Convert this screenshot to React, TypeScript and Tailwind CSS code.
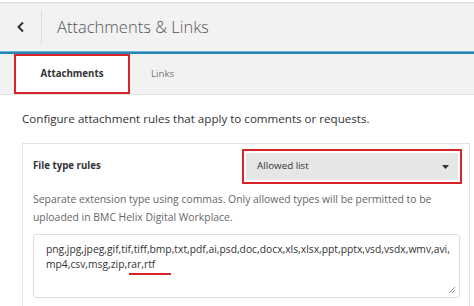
import React from "react";

const fileTypes =
  "png,jpg,jpeg,gif,tif,tiff,bmp,txt,pdf,ai,psd,doc,docx,xls,xlsx,ppt,pptx,vsd,vsdx,wmv,avi,";

export default function App() {
  return (
    <div className="w-[474px] h-[306px] overflow-hidden bg-white font-['Open_Sans',sans-serif] text-[#333]">
      {/* header */}
      <div className="pt-[2px] bg-white">
        <div className="h-[49px] flex items-stretch bg-[#f2f2f2] border-t border-[#dcdcdc]">
          <div className="w-[41px] flex items-center justify-center">
            <svg width="10" height="12" viewBox="0 0 10 12" className="text-[#333]">
              <path d="M7 1.5 L2.5 6 L7 10.5" fill="none" stroke="currentColor" strokeWidth="2" />
            </svg>
          </div>
          <div className="my-[7px] w-px bg-[#dedede]" />
          <div className="pl-[15px] flex items-center text-[16.5px] font-light text-[#555]">
            Attachments &amp; Links
          </div>
        </div>
        <div className="h-px bg-[#64b3d6]" />
        <div className="h-[2px] bg-[#2a86b5]" />
      </div>

      {/* tabs */}
      <div className="h-[41px] bg-[#f2f2f2] border-b border-[#e2e2e2] flex items-stretch pl-[14px]">
        <div className="w-[116px] bg-white border-2 border-[#d9232a] flex items-center justify-center text-[9.7px] font-bold text-[#333]">
          Attachments
        </div>
        <div className="pl-[21px] flex items-center text-[9.7px] text-[#777]">Links</div>
      </div>

      {/* content */}
      <div className="px-[22px]">
        <p className="mt-[14px] text-[11.6px] text-[#333] leading-[20px]">
          Configure attachment rules that apply to comments or requests.
        </p>
        <div className="mt-[14px] border border-[#e4e4e4] pl-[10px] pr-[10px] pt-[5px] pb-4 mr-[-18px] w-[448px]">
          <div className="flex items-center justify-between">
            <span className="text-[9.7px] font-bold text-[#333]">File type rules</span>
            <div className="w-[220px] h-[35px] border-2 border-[#d9232a] p-[2px] mr-[-3px]">
              <div className="h-full bg-[#e6e6e6] flex items-center justify-between pl-[11px] pr-[9px] text-[9.8px] text-[#333]">
                <span>Allowed list</span>
                <svg width="7" height="4" viewBox="0 0 7 4">
                  <path d="M0 0 L7 0 L3.5 4 Z" fill="#333" />
                </svg>
              </div>
            </div>
          </div>
          <p className="mt-[6px] text-[10.4px] leading-[18px] text-[#666]">
            Separate extension type using commas. Only allowed types will be permitted to be uploaded in BMC Helix Digital Workplace.
          </p>
          <div className="relative mt-[8px] w-[427px] h-[64px] border border-[#dedede] rounded-[3px] px-[12px] pt-[7px] text-[10.3px] leading-[15px] text-[#333]">
            <div className="whitespace-nowrap">{fileTypes}</div>
            <div>
              mp4,csv,msg,zip,
              <span className="relative">
                rar,rtf
                <span className="absolute left-[2px] right-[-16px] top-[16px] h-[2px] bg-[#d9232a]" />
              </span>
            </div>
            <svg width="8" height="8" viewBox="0 0 8 8" className="absolute right-[3px] bottom-[3px]">
              <path d="M7 1 L1 7 M7 4 L4 7 M7 6.5 L6.5 7" stroke="#999" strokeWidth="1" />
            </svg>
          </div>
        </div>
      </div>
    </div>
  );
}
